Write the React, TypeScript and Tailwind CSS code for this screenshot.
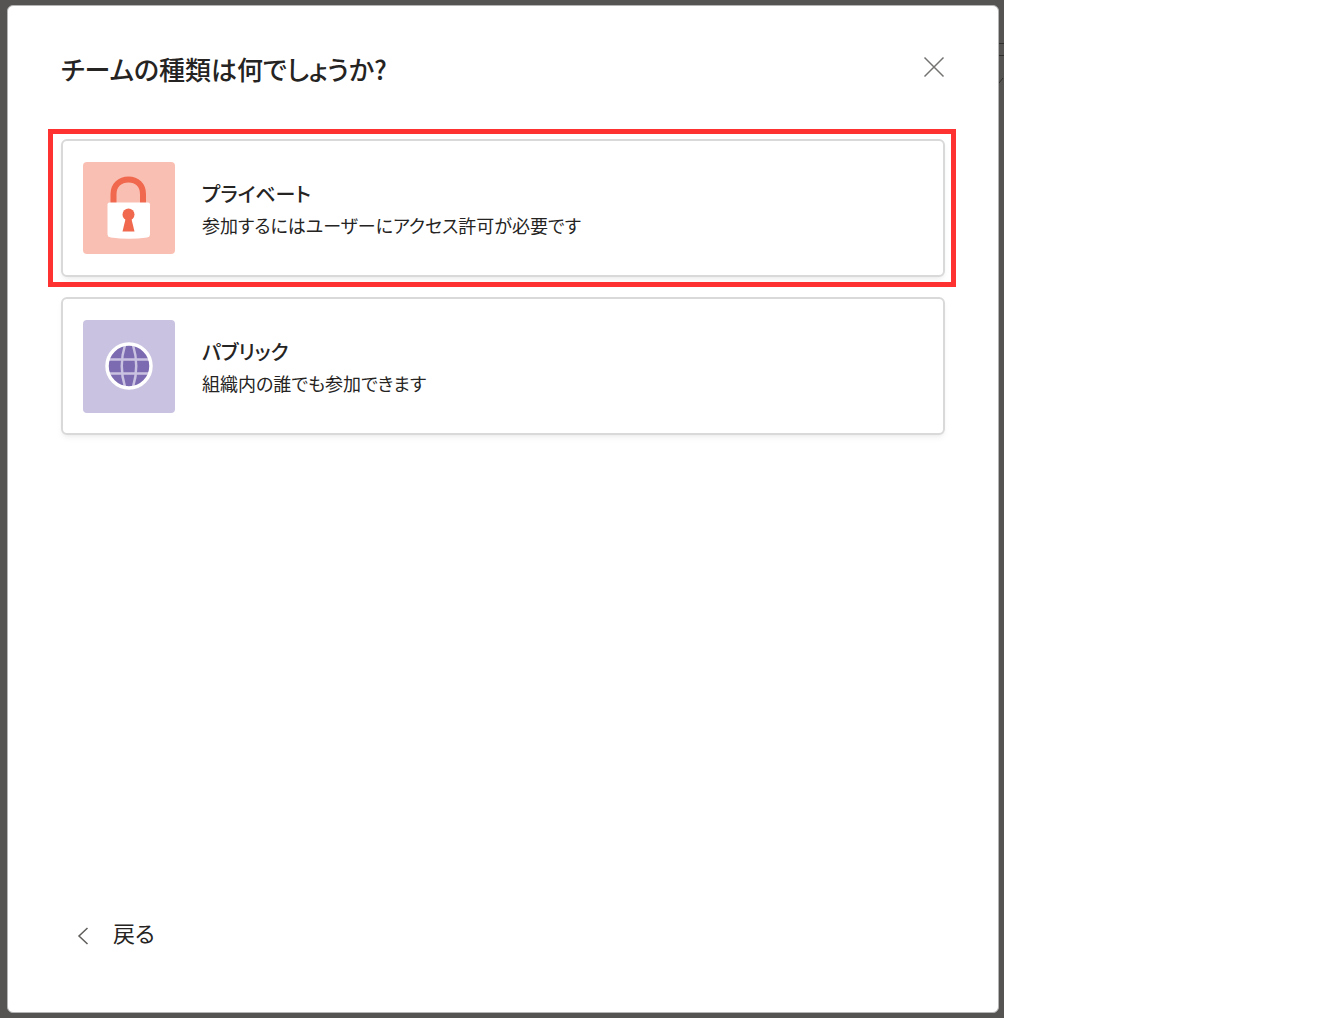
import type { ReactNode } from "react";

const LockIcon = () => (
  <svg viewBox="0 0 92 92" className="size-[92px] shrink-0" aria-hidden="true">
    <rect width="92" height="92" rx="4" fill="#fabfb3" />
    <path
      d="M30.500 42V32C30.500 23 37 17.500 45.500 17.500S60 23 60 32V42"
      fill="none"
      stroke="#f0694f"
      strokeWidth="6"
    />
    <path
      d="M26.500 40.500H65Q67 40.500 67 42.500V72Q67 75 64 75.500Q46 78 28 75.500Q24.500 75 24.500 72V42.500Q24.500 40.500 26.500 40.500Z"
      fill="#fff"
    />
    <circle cx="45.500" cy="52.500" r="6" fill="#f0694f" />
    <path d="M43 55H48L51.500 69.500H39.500Z" fill="#f0694f" />
  </svg>
);

const GlobeIcon = () => (
  <svg viewBox="0 0 92 93" className="h-[93px] w-[92px] shrink-0" aria-hidden="true">
    <rect width="92" height="93" rx="4" fill="#c9c2e0" />
    <circle cx="46" cy="46" r="22" fill="#7c6bb0" />
    <g fill="none" stroke="#c9c2e0" strokeWidth="2.500">
      <path d="M25 39.500H67M25 53.500H67" />
      <path d="M42 25Q35.500 46 42 67M50 25Q56.500 46 50 67" />
    </g>
    <circle cx="46" cy="46" r="22" fill="none" stroke="#fff" strokeWidth="3.500" />
  </svg>
);

type TypeCardProps = {
  icon: ReactNode;
  title: string;
  description: string;
};

const TypeCard = ({ icon, title, description }: TypeCardProps) => (
  <button
    type="button"
    className="flex h-[138px] w-full items-center gap-[27px] rounded-md border-2 border-[#d9d9d9] bg-white px-5 text-left shadow-md shadow-black/5"
  >
    {icon}
    <span className="flex flex-col pt-1">
      <span className="text-xl leading-[30px] font-medium">{title}</span>
      <span className="text-lg leading-8">{description}</span>
    </span>
  </button>
);

export default function App() {
  return (
    <div className="relative flex min-h-screen w-full max-w-[1004px] bg-[#555453] pt-[5px] pr-[5px] pb-[5px] pl-[7px] font-['Noto_Sans_CJK_JP',sans-serif] text-[#252423] [font-feature-settings:'palt']">
      <svg
        viewBox="0 0 5 46"
        className="absolute top-10 right-0 h-[46px] w-[5px]"
        fill="none"
        stroke="#302f2e"
        aria-hidden="true"
      >
        <path d="M0 3.500H5M0 15.500H5M0 43L4 38" />
      </svg>

      <main
        role="dialog"
        aria-labelledby="dialog-title"
        className="flex flex-1 flex-col rounded-md border border-[#b5b5b5] bg-white px-[53px] pt-[39px]"
      >
        <header className="flex h-12 items-center justify-between">
          <h1 id="dialog-title" className="text-[26px] leading-10 font-medium">
            チームの種類は何でしょうか?
          </h1>
          <button type="button" aria-label="閉じる" className="-mt-1">
            <svg
              viewBox="0 0 22 22"
              className="size-[22px]"
              fill="none"
              stroke="#747372"
              strokeWidth="1.500"
              aria-hidden="true"
            >
              <path d="M1.500 1.500L20.500 20.500M20.500 1.500L1.500 20.500" />
            </svg>
          </button>
        </header>

        <div className="-mr-[11px] -ml-[13px] mt-9 border-5 border-[#ff3232] py-[5px] pr-[6px] pl-2">
          <TypeCard
            icon={<LockIcon />}
            title="プライベート"
            description="参加するにはユーザーにアクセス許可が必要です"
          />
        </div>
        <div className="mt-[10px]">
          <TypeCard
            icon={<GlobeIcon />}
            title="パブリック"
            description="組織内の誰でも参加できます"
          />
        </div>

        <footer className="mt-auto pb-[62px] pl-4">
          <button type="button" className="flex items-center gap-6 text-[22px] leading-9">
            <svg
              viewBox="0 0 12 20"
              className="mt-2 h-5 w-3"
              fill="none"
              stroke="#605e5c"
              strokeWidth="1.500"
              aria-hidden="true"
            >
              <path d="M10.500 2L2 10L10.500 18" />
            </svg>
            戻る
          </button>
        </footer>
      </main>
    </div>
  );
}
